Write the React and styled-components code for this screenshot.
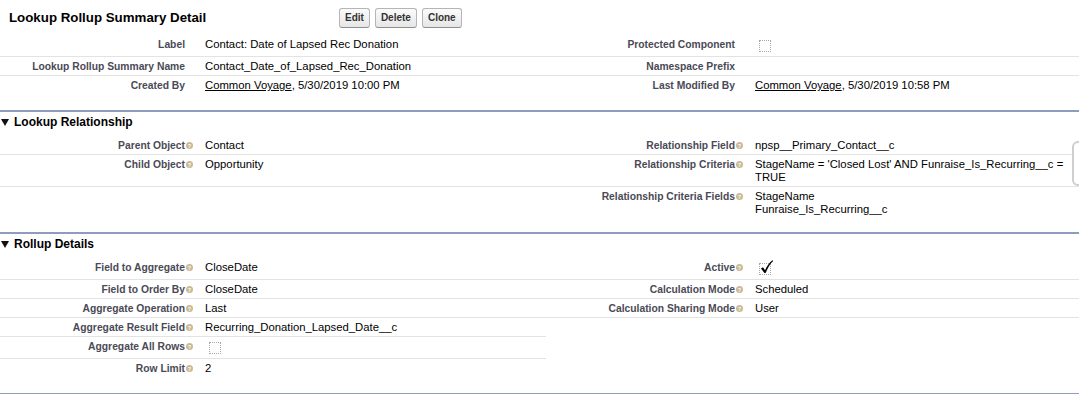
import React from "react";
import styled, { createGlobalStyle } from "styled-components";

const GlobalStyle = createGlobalStyle`
  html, body {
    margin: 0;
    padding: 0;
    background: #ffffff;
  }
  body {
    font-family: "Liberation Sans", Arial, sans-serif;
    color: #000;
  }
`;

const Page = styled.div`
  position: relative;
  width: 1079px;
  height: 394px;
  overflow: hidden;
  background: #fff;
`;

const Header = styled.div`
  display: flex;
  align-items: center;
  height: 35px;
`;

const Title = styled.h2`
  margin: 0;
  width: 330px;
  padding-left: 9px;
  font-size: 13.3px;
  font-weight: bold;
  color: #000;
`;

const ButtonGroup = styled.div`
  display: flex;
  gap: 5px;
`;

const Button = styled.button`
  height: 20px;
  padding: 0 5px;
  font-family: "Liberation Sans", Arial, sans-serif;
  font-size: 10px;
  font-weight: bold;
  color: #333;
  background: linear-gradient(#fbfbfb, #e6e6e6);
  border: 1px solid #b5b5b5;
  border-bottom-color: #8f8f8f;
  border-radius: 3px;
`;

const Table = styled.div`
  display: grid;
  grid-template-columns: 195px 351px 199px 1fr;
  margin-bottom: ${(p) => p.$gap}px;
`;

const Cell = styled.div`
  padding: 3px 10px 2px;
  line-height: 13px;
  border-bottom: 1px solid ${(p) => (p.$border ? "#e3e3e3" : "transparent")};
`;

const LabelCell = styled(Cell)`
  text-align: right;
  font-size: 10.3px;
  font-weight: bold;
  color: #4a4a56;
  white-space: nowrap;
`;

const DataCell = styled(Cell)`
  font-size: 11.3px;
  color: #000;
`;

const Section = styled.section`
  border-top: 2px solid #8e9dbe;
`;

const SectionTitle = styled.h3`
  display: flex;
  align-items: center;
  margin: 0;
  padding: 3px 0 7px 1px;
  font-size: 12px;
  line-height: 14px;
  font-weight: bold;
  color: #000;
`;

const Caret = styled.span`
  width: 0;
  height: 0;
  margin-right: 5px;
  border-left: 4px solid transparent;
  border-right: 4px solid transparent;
  border-top: 7px solid #111;
`;

const BottomRule = styled.div`
  border-top: 2px solid #8e9dbe;
`;

const HelpIcon = styled.svg`
  width: 7px;
  height: 7px;
  margin-left: 1px;
  margin-right: -8px;
  vertical-align: 0px;
`;

const Link = styled.a`
  color: #000;
  text-decoration: underline;
`;

const CheckWrap = styled.span`
  position: relative;
  display: inline-block;
  width: 21px;
  height: 16px;
  vertical-align: top;
`;

const CheckBox = styled.span`
  position: absolute;
  left: 4px;
  top: 2px;
  width: 10px;
  height: 10px;
  border: 1px dotted #a8a8a8;
`;

const CheckMark = styled.svg`
  position: absolute;
  left: 3px;
  top: -2px;
  width: 16px;
  height: 16px;
`;

const EdgeTab = styled.div`
  position: absolute;
  top: 141px;
  right: -9px;
  width: 12px;
  height: 41px;
  border: 2px solid #cfcfcf;
  border-radius: 6px;
  background: #fff;
`;

const Help = () => (
  <HelpIcon viewBox="0 0 7 7">
    <circle cx="3.5" cy="3.5" r="3.5" fill="#cbb994" />
    <text
      x="3.5"
      y="5.6"
      textAnchor="middle"
      fontSize="5.5"
      fontWeight="bold"
      fill="#fff"
      fontFamily="Liberation Sans, sans-serif"
    >
      ?
    </text>
  </HelpIcon>
);

const Checkbox = ({ checked }) => (
  <CheckWrap>
    <CheckBox />
    {checked && (
      <CheckMark viewBox="0 0 16 16">
        <path
          d="M3 9.5 L5 8.3 L7 11.3 C9 7 11 4 14.5 1.3 L15.2 2 C12 5 10 8.5 7.6 14 L6.4 14 Z"
          fill="#000"
        />
      </CheckMark>
    )}
  </CheckWrap>
);

const renderValue = (v) => {
  if (v == null) return null;
  if (v.type === "check") return <Checkbox checked={v.checked} />;
  if (v.type === "user")
    return (
      <>
        <Link>{v.name}</Link>, {v.date}
      </>
    );
  if (v.type === "lines")
    return v.lines.map((l, i) => <div key={i}>{l}</div>);
  return v;
};

const FieldCells = ({ field, border }) => {
  if (!field) {
    return (
      <>
        <LabelCell $border={false} />
        <DataCell $border={false} />
      </>
    );
  }
  return (
    <>
      <LabelCell $border={border}>
        {field.label}
        {field.help && <Help />}
      </LabelCell>
      <DataCell $border={border}>{renderValue(field.value)}</DataCell>
    </>
  );
};

const DetailTable = ({ rows, gap }) => (
  <Table $gap={gap}>
    {rows.map((row, i) => {
      const last = i === rows.length - 1;
      return (
        <React.Fragment key={i}>
          <FieldCells field={row[0]} border={!last} />
          <FieldCells field={row[1]} border={!last} />
        </React.Fragment>
      );
    })}
  </Table>
);

const user = (date) => ({ type: "user", name: "Common Voyage", date });

const mainRows = [
  [
    { label: "Label", value: "Contact: Date of Lapsed Rec Donation" },
    { label: "Protected Component", value: { type: "check", checked: false } },
  ],
  [
    { label: "Lookup Rollup Summary Name", value: "Contact_Date_of_Lapsed_Rec_Donation" },
    { label: "Namespace Prefix", value: "" },
  ],
  [
    { label: "Created By", value: user("5/30/2019 10:00 PM") },
    { label: "Last Modified By", value: user("5/30/2019 10:58 PM") },
  ],
];

const relationshipRows = [
  [
    { label: "Parent Object", help: true, value: "Contact" },
    { label: "Relationship Field", help: true, value: "npsp__Primary_Contact__c" },
  ],
  [
    { label: "Child Object", help: true, value: "Opportunity" },
    {
      label: "Relationship Criteria",
      help: true,
      value: {
        type: "lines",
        lines: ["StageName = 'Closed Lost' AND Funraise_Is_Recurring__c =", "TRUE"],
      },
    },
  ],
  [
    { label: "", value: "" },
    {
      label: "Relationship Criteria Fields",
      help: true,
      value: { type: "lines", lines: ["StageName", "Funraise_Is_Recurring__c"] },
    },
  ],
];

const rollupRows = [
  [
    { label: "Field to Aggregate", help: true, value: "CloseDate" },
    { label: "Active", help: true, value: { type: "check", checked: true } },
  ],
  [
    { label: "Field to Order By", help: true, value: "CloseDate" },
    { label: "Calculation Mode", help: true, value: "Scheduled" },
  ],
  [
    { label: "Aggregate Operation", help: true, value: "Last" },
    { label: "Calculation Sharing Mode", help: true, value: "User" },
  ],
  [{ label: "Aggregate Result Field", help: true, value: "Recurring_Donation_Lapsed_Date__c" }, null],
  [{ label: "Aggregate All Rows", help: true, value: { type: "check", checked: false } }, null],
  [{ label: "Row Limit", help: true, value: "2" }, null],
];

export default function App() {
  return (
    <>
      <GlobalStyle />
      <Page>
        <Header>
          <Title>Lookup Rollup Summary Detail</Title>
          <ButtonGroup>
            <Button>Edit</Button>
            <Button>Delete</Button>
            <Button>Clone</Button>
          </ButtonGroup>
        </Header>
        <DetailTable rows={mainRows} gap={15} />
        <Section>
          <SectionTitle>
            <Caret />
            Lookup Relationship
          </SectionTitle>
          <DetailTable rows={relationshipRows} gap={13} />
        </Section>
        <Section>
          <SectionTitle>
            <Caret />
            Rollup Details
          </SectionTitle>
          <DetailTable rows={rollupRows} gap={15} />
        </Section>
        <BottomRule />
        <EdgeTab />
      </Page>
    </>
  );
}
